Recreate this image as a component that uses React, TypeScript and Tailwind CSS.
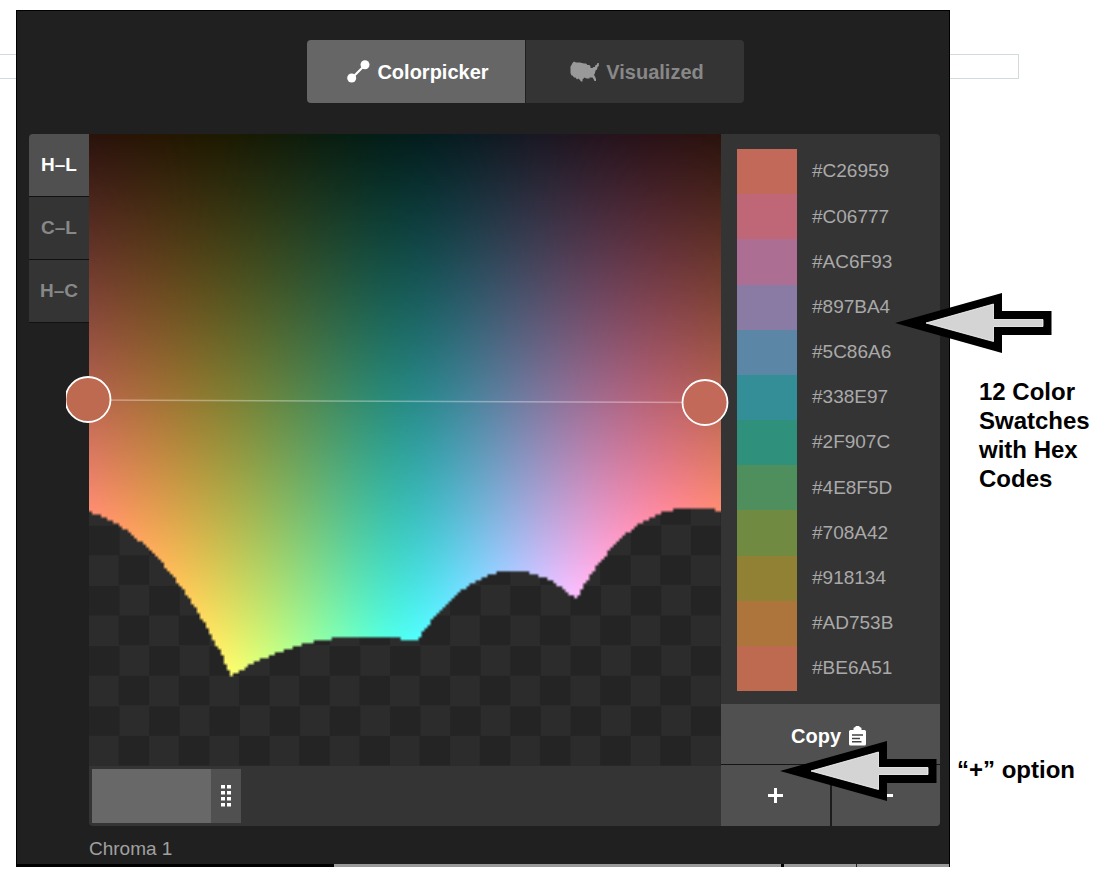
import { useLayoutEffect, useRef, useState } from "react";
import clsx from "clsx";

const SIZE = 211;
const MAX_LIGHTNESS = 1.7;
const MAX_CHROMA = 5;

const swatches = [
  "#C26959",
  "#C06777",
  "#AC6F93",
  "#897BA4",
  "#5C86A6",
  "#338E97",
  "#2F907C",
  "#4E8F5D",
  "#708A42",
  "#918134",
  "#AD753B",
  "#BE6A51",
];

const finv = (t: number) =>
  t > 6 / 29 ? t * t * t : 3 * (6 / 29) * (6 / 29) * (t - 4 / 29);

const gamma = (v: number) => {
  const c = Math.min(1, Math.max(0, v));
  return 255 * (c <= 0.0031308 ? 12.92 * c : 1.055 * Math.pow(c, 1 / 2.4) - 0.055);
};

// returns null when the colour is outside of sRGB
const hclToRgb = (h: number, c: number, l: number) => {
  const angle = Math.PI / 3 - (h / 180) * Math.PI;
  const r = (l * 0.311 + 0.125) * c;
  const sl = (l * 0.61 + 0.09 + 0.16) / 1.16;
  const x = 0.96421 * finv(sl + (Math.sin(angle) * r) / 5);
  const y = finv(sl);
  const z = 0.82519 * finv(sl - (Math.cos(angle) * r) / 2);
  const rgb = [
    3.2406 * x - 1.5372 * y - 0.4986 * z,
    -0.9689 * x + 1.8758 * y + 0.0415 * z,
    0.0557 * x - 0.204 * y + 1.057 * z,
  ];
  if (Math.min(...rgb) < -0.001 || Math.max(...rgb) > 1.001) return null;
  return rgb.map(gamma);
};

const Gradient = ({ chroma }: { chroma: number }) => {
  const ref = useRef<HTMLCanvasElement>(null);

  useLayoutEffect(() => {
    const ctx = ref.current?.getContext("2d");
    if (!ctx) return;
    const image = ctx.createImageData(SIZE, SIZE);
    for (let y = 0; y < SIZE; y++) {
      for (let x = 0; x < SIZE; x++) {
        const rgb = hclToRgb((x / SIZE) * 360, chroma, (y / SIZE) * MAX_LIGHTNESS);
        if (rgb) image.data.set([...rgb, 255], (y * SIZE + x) * 4);
      }
    }
    ctx.putImageData(image, 0, 0);
  }, [chroma]);

  return (
    <div className="relative aspect-square w-full bg-[conic-gradient(#242424_25%,#2c2c2c_0_50%,#242424_0_75%,#2c2c2c_0)] bg-[length:9.524%_9.524%]">
      <canvas ref={ref} width={SIZE} height={SIZE} className="block h-full w-full" />
      <svg viewBox="0 0 632 632" className="absolute inset-0 h-full w-full overflow-visible">
        <clipPath id="handles">
          <rect x="-23" y="0" width="680" height="632" />
        </clipPath>
        <g clipPath="url(#handles)">
          <path d="M-1 266L616 268.500" stroke="#fff" strokeOpacity="0.35" strokeWidth="1.600" />
          <circle cx="-1" cy="265.500" r="22.500" fill="#BE6A51" stroke="#fff" strokeWidth="1.800" />
          <circle cx="616" cy="268.500" r="22.500" fill="#C26959" stroke="#fff" strokeWidth="1.800" />
        </g>
      </svg>
    </div>
  );
};

const LineIcon = () => (
  <svg width="23" height="23" viewBox="0 0 23 23" fill="#fff">
    <path d="M5 18L18 5" stroke="#fff" strokeWidth="2.200" />
    <circle cx="4.700" cy="18" r="4.500" />
    <circle cx="18" cy="4.700" r="4.500" />
  </svg>
);

const MapIcon = () => (
  <svg width="29" height="21" viewBox="0 0 29 21" fill="#999">
    <path d="M2.500 2L4 0.500L6 1.500H10L14 2.500H16L17.500 4H19.500L20.500 5.500V7H22.500L23.500 6H25V4.500L26.500 4L27.500 2H28.800V5L27.500 6L27 8.500L25.500 9.500L25 12L24 14L25 15.500L26 18V20H24.500L23.500 18L22.500 16.500H19.500V17.500H16.500L14.500 16.500L12.500 18.500V20.500H11L9.500 18.500L8.500 17.500L7 18.500L5.500 16.500H4L2.500 14.500H1.500L0.500 12V5.500L1.500 4Z" />
  </svg>
);

const ClipboardIcon = () => (
  <svg width="17" height="20" viewBox="0 0 17 20" fill="none">
    <path
      d="M1.500 4H4.500V2.500Q4.500 1.200 6 1.200L7 0H10L11 1.200Q12.500 1.200 12.500 2.500V4H15.500Q17 4 17 5.500V18Q17 19.500 15.500 19.500H1.500Q0 19.500 0 18V5.500Q0 4 1.500 4Z"
      fill="#fff"
    />
    <path d="M3 9H14M3 12.500H11M3 15.800H12.500" stroke="#444" strokeWidth="1.400" />
  </svg>
);

const Arrow = ({ className }: { className: string }) => (
  <svg width="157" height="60" viewBox="0 0 157 60" className={clsx("absolute", className)}>
    <path d="M0 30L107 0V18H156.500V42H107V60Z" fill="#000" />
    <path d="M31 30L98.500 11V26.500H148V33.500H98.500V48.500Z" fill="#d4d4d4" stroke="#fff" strokeWidth="0.800" />
  </svg>
);

const App = () => {
  const [tab, setTab] = useState("Colorpicker");
  const [axis, setAxis] = useState("H–L");
  const [chroma, setChroma] = useState(1);

  return (
    <div className="relative flex min-h-screen items-start overflow-hidden bg-white pt-[10px] pl-4 font-['Liberation_Sans',Arial,sans-serif]">
      <div className="absolute top-[54px] right-[85px] -left-px h-[25px] border border-[#d3dade]" />

      <main className="relative min-w-0 flex-1 border border-b-0 border-black bg-[#202020]">
        <nav className="flex justify-center gap-px pt-[29px] pl-[85px] text-[20px] font-bold">
          {["Colorpicker", "Visualized"].map((name) => (
            <button
              key={name}
              type="button"
              onClick={() => setTab(name)}
              className={clsx(
                "flex h-[63px] w-[218px] items-center justify-center gap-[7px] pl-1 first:rounded-l last:rounded-r",
                tab === name ? "bg-[#666] text-white" : "bg-[#343434] text-[#888]"
              )}
            >
              {name === "Colorpicker" ? <LineIcon /> : <MapIcon />}
              {name}
            </button>
          ))}
        </nav>

        <div className="mt-[31px] flex pr-[9px] pl-3">
          <div className="w-[60px] shrink-0 text-[19px] font-bold">
            {["H–L", "C–L", "H–C"].map((name) => (
              <button
                key={name}
                type="button"
                onClick={() => setAxis(name)}
                className={clsx(
                  "block h-[63px] w-full border-b border-[#111] first:rounded-tl-sm",
                  axis === name ? "bg-[#505050] text-white" : "bg-[#343434] text-[#888]"
                )}
              >
                {name}
              </button>
            ))}
          </div>

          <div className="min-w-0 flex-1">
            <Gradient chroma={chroma} />
            <div className="relative flex h-[60px] rounded-bl bg-[#343434] p-[3px]">
              <div
                className="bg-[#686868]"
                style={{ width: `calc((100% - 30px) * ${chroma / MAX_CHROMA})` }}
              />
              <div className="flex w-[30px] items-center justify-center bg-[#505050]">
                <svg width="10" height="22" fill="#fff">
                  {[0, 6, 12, 18].map((y) => (
                    <path key={y} d={`M0 ${y}h4v3.500h-4zM6 ${y}h4v3.500h-4z`} />
                  ))}
                </svg>
              </div>
              <input
                id="chroma"
                type="range"
                min={0}
                max={MAX_CHROMA}
                step={0.1}
                value={chroma}
                onChange={(e) => setChroma(Number(e.target.value))}
                className="absolute inset-0 h-full w-full cursor-pointer opacity-0"
              />
            </div>
          </div>

          <div className="flex w-[219px] shrink-0 flex-col overflow-hidden rounded-r bg-[#343434]">
            <ul className="flex flex-1 flex-col px-4 pt-[15px] pb-[13px] text-[19px] text-[#a9a9a9]">
              {swatches.map((hex) => (
                <li key={hex} className="flex flex-1 items-center gap-[15px]">
                  <span className="w-[60px] self-stretch" style={{ backgroundColor: hex }} />
                  {hex}
                </li>
              ))}
            </ul>
            <button
              type="button"
              className="flex h-[61px] items-center justify-center gap-2 border-b border-[#151515] bg-[#505050] pt-[3px] pr-3 pl-2 text-[20px] font-bold text-white"
            >
              Copy
              <ClipboardIcon />
            </button>
            <div className="flex h-[61px] bg-[#505050]">
              <button
                type="button"
                aria-label="Add a color"
                className="flex flex-1 items-center justify-center border-r-2 border-[#1c1c1c]"
              >
                <svg width="15" height="15" stroke="#fff" strokeWidth="3">
                  <path d="M0 7.500H15M7.500 0V15" />
                </svg>
              </button>
              <button
                type="button"
                aria-label="Remove a color"
                className="flex flex-1 items-center justify-center"
              >
                <svg width="15" height="15" stroke="#fff" strokeWidth="3">
                  <path d="M0 7.500H15" />
                </svg>
              </button>
            </div>
          </div>
        </div>

        <label htmlFor="chroma" className="mt-[9px] block pb-px pl-[72px] text-[19px] leading-7 text-[#a0a0a0]">
          Chroma {chroma}
        </label>

        {/* sliver of the page below the panel */}
        <div className="flex h-[3px] bg-[#999]">
          <div className="w-[34%] bg-black" />
          <div className="ml-auto flex w-[168px] gap-x-[72px]">
            <span className="w-[3px] shrink-0 bg-black" />
            <span className="w-px shrink-0 bg-[#222]" />
          </div>
        </div>
      </main>

      <aside className="w-[154px] shrink-0 pt-[367px] text-[24px] leading-[29px] font-bold text-black">
        <div className="relative pl-[29px]">
          <Arrow className="-top-[84px] -left-[55px]" />
          <p>12 Color Swatches with Hex Codes</p>
        </div>
        <div className="relative mt-[262px] pl-[7px]">
          <Arrow className="-top-[14px] -left-[170px]" />
          <p>“+” option</p>
        </div>
      </aside>
    </div>
  );
};

export default App;
